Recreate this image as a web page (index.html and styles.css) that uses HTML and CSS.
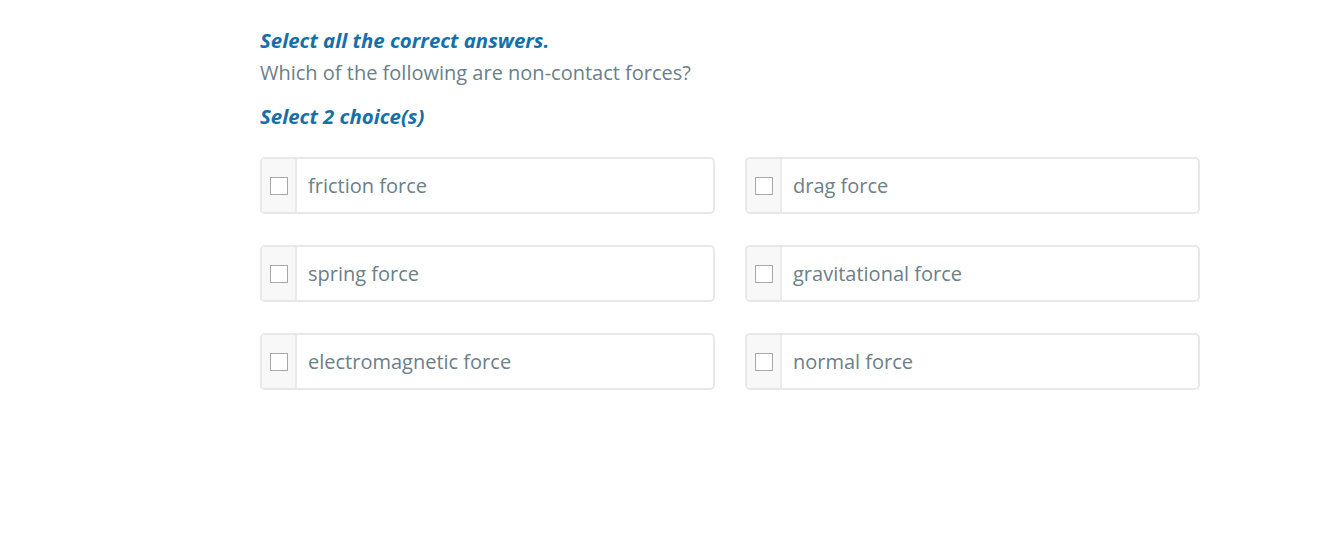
FILE: index.html
```html
<!DOCTYPE html>
<html>
<head>
  <title>Non-contact forces</title>
  <link rel="stylesheet" href="styles.css">
</head>
<body>
  <div class="quiz">
    <p class="instruction">Select all the correct answers.</p>
    <p class="question">Which of the following are non-contact forces?</p>
    <p class="instruction count">Select 2 choice(s)</p>

    <div class="choices">
      <label class="choice">
        <span class="box"><span class="check"></span></span>
        <span class="text">friction force</span>
      </label>
      <label class="choice">
        <span class="box"><span class="check"></span></span>
        <span class="text">drag force</span>
      </label>
      <label class="choice">
        <span class="box"><span class="check"></span></span>
        <span class="text">spring force</span>
      </label>
      <label class="choice">
        <span class="box"><span class="check"></span></span>
        <span class="text">gravitational force</span>
      </label>
      <label class="choice">
        <span class="box"><span class="check"></span></span>
        <span class="text">electromagnetic force</span>
      </label>
      <label class="choice">
        <span class="box"><span class="check"></span></span>
        <span class="text">normal force</span>
      </label>
    </div>
  </div>
</body>
</html>
```

FILE: styles.css
```css
body {
  margin: 0;
  padding: 0;
  background-color: white;
  font-family: "Open Sans", Arial, sans-serif;
  color: #6b8087;
}

.quiz {
  width: 940px;
  padding: 26px 0 0 260px;
}

p {
  margin: 0;
}

.instruction {
  color: #1670a8;
  font-size: 20.4px;
  font-weight: bold;
  font-style: italic;
  line-height: 28px;
}

.question {
  font-size: 20px;
  line-height: 28px;
  margin-top: 5px;
}

.count {
  margin-top: 15px;
}

.choices {
  display: grid;
  grid-template-columns: 1fr 1fr;
  column-gap: 30px;
  row-gap: 31px;
  margin-top: 27px;
}

.choice {
  display: flex;
  height: 53px;
  border: 2px solid #e8e8e8;
  border-radius: 5px;
  cursor: pointer;
}

.box {
  width: 33px;
  background: #f8f8f8;
  border-right: 2px solid #ebebeb;
  border-radius: 4px 0 0 4px;
  display: flex;
  align-items: center;
  justify-content: center;
}

.check {
  width: 16px;
  height: 16px;
  border: 1px solid #a8a8a8;
  background: white;
}

.text {
  display: flex;
  align-items: center;
  padding-left: 11px;
  font-size: 20px;
}
```
